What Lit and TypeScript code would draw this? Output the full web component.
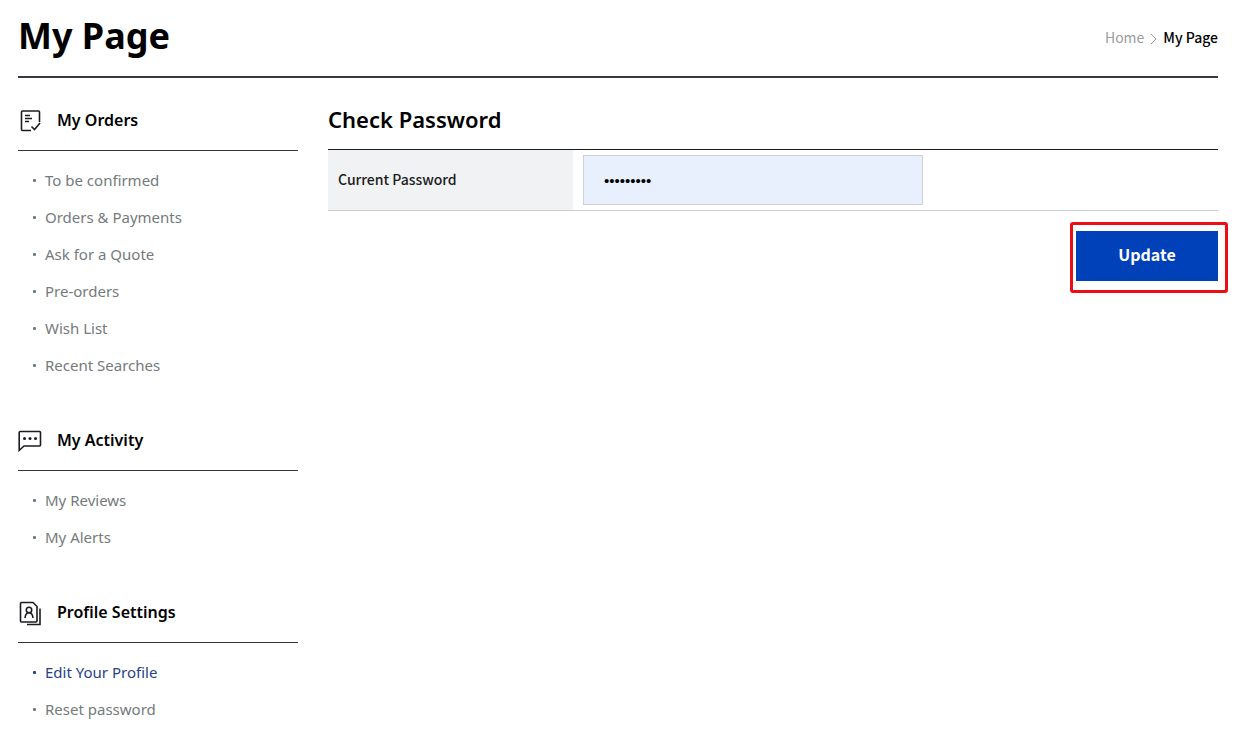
import { LitElement, html, css, svg } from "lit";
import { customElement } from "lit/decorators.js";
import { classMap } from "lit/directives/class-map.js";

const ordersIcon = svg`
  <path d="M21.500 15V5a1 1 0 0 0-1-1H4.500a1 1 0 0 0-1 1v17.500a1 1 0 0 0 1 1H13" />
  <path d="M7 8.500h5M7 11.500h7M7 14.500h4" />
  <path d="M13.500 19.500l3 3 5.500-6.500" />`;

const activityIcon = svg`
  <path d="M1.200 23.500V5.500a1 1 0 0 1 1-1h19.300a1 1 0 0 1 1 1v12.500a1 1 0 0 1-1 1H6z" />
  <g class="solid">
    <circle cx="6.500" cy="11.500" r="1.500" />
    <circle cx="12" cy="11.500" r="1.500" />
    <circle cx="17.500" cy="11.500" r="1.500" />
  </g>`;

const profileIcon = svg`
  <path d="M3.500 3.500H15l4 4v14.500a1 1 0 0 1-1 1H3.500a1 1 0 0 1-1-1V4.500a1 1 0 0 1 1-1z" />
  <path d="M22 9.500v16H9" />
  <circle cx="11" cy="11" r="2.700" />
  <path d="M7 19c.3-3.600 1.600-5.300 4-5.300s3.700 1.700 4 5.300" />`;

interface MenuGroup {
  title: string;
  icon: unknown;
  items: string[];
}

const groups: MenuGroup[] = [
  {
    title: "My Orders",
    icon: ordersIcon,
    items: ["To be confirmed", "Orders & Payments", "Ask for a Quote", "Pre-orders", "Wish List", "Recent Searches"],
  },
  { title: "My Activity", icon: activityIcon, items: ["My Reviews", "My Alerts"] },
  { title: "Profile Settings", icon: profileIcon, items: ["Edit Your Profile", "Reset password"] },
];

@customElement("side-menu")
export class SideMenu extends LitElement {
  static styles = css`
    :host { display: block; }
    .title {
      display: flex;
      align-items: center;
      gap: 15px;
      height: 60px;
      margin: 0;
      border-bottom: 1px solid #333338;
      font-size: 16px;
      font-weight: 600;
      color: #000;
    }
    .icon {
      width: 24px;
      height: 27px;
      fill: none;
      stroke: #1c1c20;
      stroke-width: 1.6;
    }
    .solid { fill: #1c1c20; stroke: none; }
    .list {
      list-style: none;
      margin: 0 0 26px;
      padding: 11px 0 0 15px;
    }
    .item {
      display: flex;
      align-items: center;
      gap: 9px;
      font-size: 15px;
      line-height: 37px;
      color: #757a7c;
    }
    .item::before {
      content: "";
      width: 3px;
      height: 3px;
      border-radius: 1px;
      background: currentColor;
    }
    .current { color: #1f428c; }
    .link { color: inherit; text-decoration: none; }
  `;

  render() {
    return html`<nav>
      ${groups.map(
        (g) => html`
          <h2 class="title">
            <svg class="icon" viewBox="0 0 24 27" aria-hidden="true">${g.icon}</svg>
            ${g.title}
          </h2>
          <ul class="list">
            ${g.items.map(
              (i) => html`<li class=${classMap({ item: true, current: i === "Edit Your Profile" })}>
                <a class="link" href="#">${i}</a>
              </li>`
            )}
          </ul>
        `
      )}
    </nav>`;
  }
}

@customElement("app-root")
export class AppRoot extends LitElement {
  static styles = css`
    :host {
      display: block;
      padding: 0 40px 0 18px;
      background: #fff;
      font-family: "Noto Sans", sans-serif;
      color: #000;
    }
    .header {
      display: flex;
      justify-content: space-between;
      align-items: center;
      height: 76px;
      border-bottom: 2px solid #383842;
    }
    .heading { margin: 0; padding-bottom: 4px; font-size: 36px; line-height: 48px; font-weight: 700; }
    .crumbs {
      display: flex;
      align-items: center;
      gap: 6px;
      padding-bottom: 2px;
      font-family: "Noto Sans CJK KR", sans-serif;
      font-size: 14px;
      line-height: 22px;
    }
    .home { color: #999c9f; text-decoration: none; }
    .chevron { width: 7px; height: 12px; padding-top: 3px; fill: none; stroke: #999c9f; }
    .here { font-weight: 500; }
    .columns {
      display: grid;
      grid-template-columns: 280px 1fr;
      gap: 30px;
      padding-top: 12px;
    }
    .subheading {
      margin: 0;
      font-size: 22px;
      line-height: 59px;
      font-weight: 600;
    }
    .table {
      width: 100%;
      border-collapse: separate;
      border-spacing: 0;
      border-top: 1px solid #1c1c20;
      border-bottom: 1px solid #cfcfcf;
    }
    .name {
      box-sizing: border-box;
      width: 245px;
      padding: 0 10px 2px;
      background: #f1f2f4;
      text-align: left;
      font-family: "Noto Sans CJK KR", sans-serif;
      font-size: 14px;
      font-weight: 500;
      color: #1c1c20;
    }
    .value { padding: 5px 10px; }
    .password {
      display: block;
      box-sizing: border-box;
      width: 100%;
      max-width: 340px;
      height: 50px;
      padding: 0 20px;
      border: 1px solid #cdd2da;
      border-radius: 0;
      background: #e8f0fe;
      font-family: "Liberation Sans", sans-serif;
      font-size: 15px;
      color: #000;
      outline: none;
    }
    .actions { display: flex; justify-content: flex-end; padding-top: 20px; }
    .spot { position: relative; }
    .spot::after {
      content: "";
      position: absolute;
      inset: -9px -10px -12px -6px;
      border: 3px solid #ec0d16;
      border-radius: 3px;
      pointer-events: none;
    }
    .update {
      display: block;
      width: 142px;
      height: 50px;
      padding: 0 0 4px;
      border: 0;
      background: #0041b9;
      color: #fff;
      font-family: "Noto Sans CJK KR", sans-serif;
      font-size: 16px;
      font-weight: 700;
    }
  `;

  render() {
    return html`
      <header class="header">
        <h1 class="heading">My Page</h1>
        <nav class="crumbs">
          <a class="home" href="#">Home</a>
          <svg class="chevron" viewBox="0 0 7 12" aria-hidden="true"><path d="M1 1l5 5-5 5" /></svg>
          <span class="here">My Page</span>
        </nav>
      </header>
      <div class="columns">
        <side-menu></side-menu>
        <main>
          <h2 class="subheading">Check Password</h2>
          <form @submit=${(e: Event) => e.preventDefault()}>
            <table class="table">
              <tr>
                <th class="name" scope="row"><label for="pw">Current Password</label></th>
                <td class="value">
                  <input class="password" id="pw" type="password" .value=${"password1"} />
                </td>
              </tr>
            </table>
            <div class="actions">
              <div class="spot"><button class="update" type="submit">Update</button></div>
            </div>
          </form>
        </main>
      </div>
    `;
  }
}
